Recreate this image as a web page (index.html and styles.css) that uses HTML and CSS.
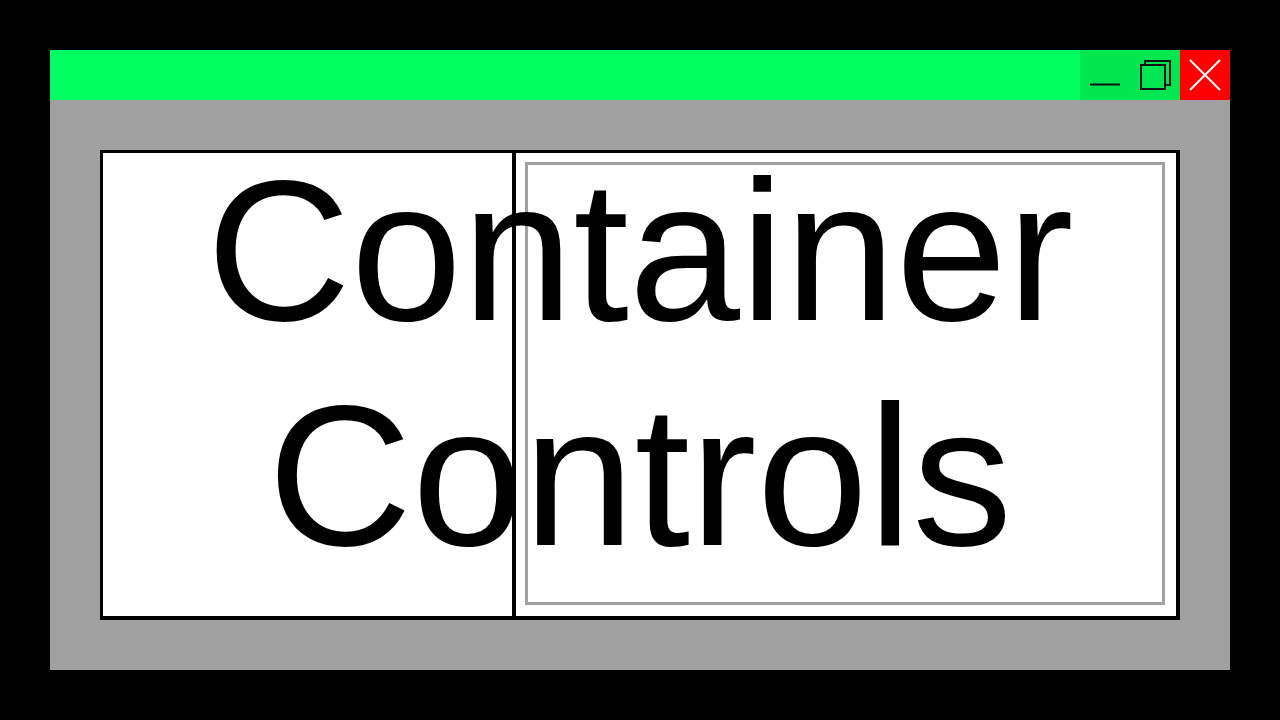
FILE: index.html
```html
<!DOCTYPE html>
<html>
<head>
<meta charset="utf-8">
<link rel="stylesheet" href="styles.css">
</head>
<body>
<div class="window">
  <div class="titlebar">
    <div class="spacer"></div>
    <div class="btn btn-min">
      <svg width="50" height="50" viewBox="0 0 50 50"><line x1="10" y1="34.5" x2="40" y2="34.5" stroke="#111" stroke-width="2"/></svg>
    </div>
    <div class="btn btn-max">
      <svg width="50" height="50" viewBox="0 0 50 50">
        <path d="M15 14 V11 H40 V35 H35" fill="none" stroke="#111" stroke-width="2"/>
        <rect x="11" y="15" width="24" height="24" fill="none" stroke="#111" stroke-width="2"/>
      </svg>
    </div>
    <div class="btn btn-close">
      <svg width="50" height="50" viewBox="0 0 50 50"><path d="M10 10 L40 40 M40 10 L10 40" stroke="#fff" stroke-width="2"/></svg>
    </div>
  </div>
  <div class="client">
    <div class="split">
      <div class="pane-left"></div>
      <div class="splitter"></div>
      <div class="pane-right">
        <div class="group"></div>
      </div>
    </div>
  </div>
</div>
<div class="caption">Container<br>Controls</div>
</body>
</html>
```
FILE: styles.css
```css
html, body {
  margin: 0;
  padding: 0;
}
body {
  background: #000;
  width: 1280px;
  height: 720px;
  padding: 50px;
  box-sizing: border-box;
  overflow: hidden;
  font-family: "Liberation Sans", Arial, sans-serif;
}
.window {
  width: 1180px;
  height: 620px;
  background: #a0a0a0;
  display: flex;
  flex-direction: column;
}
.titlebar {
  height: 50px;
  background: #00ff60;
  display: flex;
}
.spacer {
  flex: 1;
}
.btn {
  width: 50px;
  height: 50px;
}
.btn svg {
  display: block;
}
.btn-min, .btn-max {
  background: #00e650;
}
.btn-close {
  background: #ff0000;
}
.client {
  flex: 1;
  padding: 50px;
}
.split {
  width: 1080px;
  height: 470px;
  box-sizing: border-box;
  border: 4px solid #000;
  border-top-width: 3px;
  border-left-width: 3px;
  display: flex;
  background: #fff;
}
.pane-left {
  width: 409px;
}
.splitter {
  width: 4px;
  background: #000;
}
.pane-right {
  flex: 1;
  padding: 9px 11px 11px 9px;
  display: flex;
}
.group {
  flex: 1;
  border: 3px solid #a0a0a0;
}
.caption {
  position: absolute;
  left: 0;
  top: 138px;
  width: 1280px;
  text-align: center;
  font-size: 200px;
  line-height: 225px;
  color: #000;
}
```
